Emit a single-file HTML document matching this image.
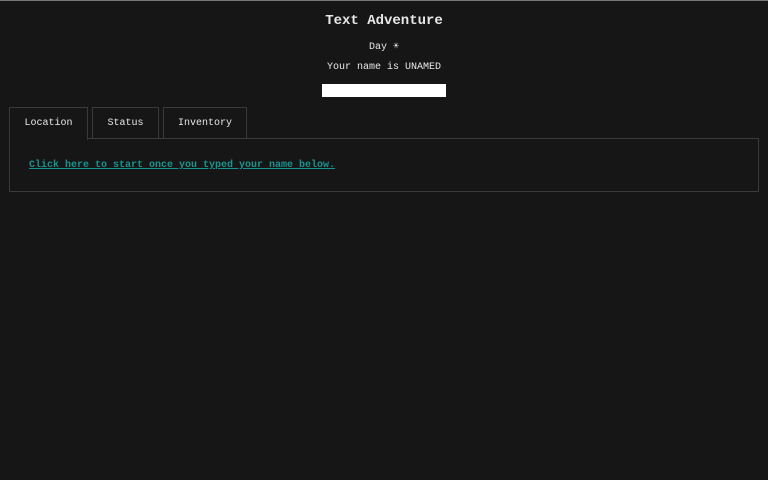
<!DOCTYPE html>
<html><head><style>
html,body{margin:0;padding:0;}
body{width:768px;height:480px;background:#161616;color:#e8e8e8;font-family:"Liberation Mono",monospace;position:relative;overflow:hidden;border-top:1px solid #777;box-sizing:border-box;}
.a{position:absolute;white-space:nowrap;}
.title{left:0;width:768px;text-align:center;top:12px;font-size:14px;font-weight:bold;}
.c{left:0;width:768px;text-align:center;font-size:10px;}
.inp{left:322px;top:83px;width:124px;height:13px;background:#fff;}
.tab{top:106px;height:31px;border:1px solid #3a3a3a;border-bottom:none;font-size:10px;line-height:31px;text-align:center;box-sizing:border-box;}
.panel{left:9px;top:137px;width:750px;height:54px;border:1px solid #3a3a3a;box-sizing:border-box;}
.link{left:29px;top:159px;font-size:10px;font-weight:bold;color:#16948f;text-decoration:underline;}
</style></head><body>
<div class="a title">Text Adventure</div>
<div class="a c" style="top:40px">Day ☀</div>
<div class="a c" style="top:61px">Your name is UNAMED</div>
<div class="a inp"></div>
<div class="a panel"></div>
<div class="a tab" style="left:9px;width:79px;height:33px;background:#161616;">Location</div>
<div class="a tab" style="left:92px;width:67px;">Status</div>
<div class="a tab" style="left:163px;width:84px;">Inventory</div>
<div class="a link">Click here to start once you typed your name below.</div>
</body></html>
